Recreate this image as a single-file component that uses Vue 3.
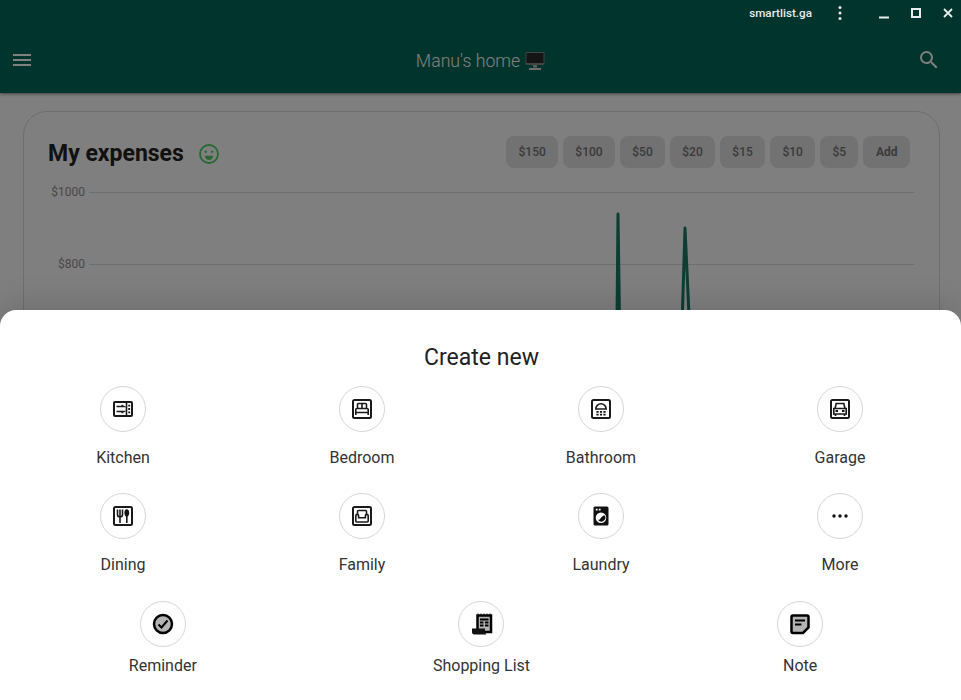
<script setup>
const chips = ['$150', '$100', '$50', '$20', '$15', '$10', '$5', 'Add']
const ticks = ['$1000', '$800', '$600', '$400']

const frame = ['s', 'M4.500 3h15A1.500 1.500 0 0 1 21 4.500v15a1.500 1.500 0 0 1-1.500 1.500h-15A1.500 1.500 0 0 1 3 19.500v-15A1.500 1.500 0 0 1 4.500 3z']

// s = outline, t = thin outline, f = solid, g = grey fill with outline, w = white knock-out
const rooms = [
  { label: 'Kitchen', parts: [
    ['s', 'M4 5h16a1 1 0 0 1 1 1v12a1 1 0 0 1-1 1H4a1 1 0 0 1-1-1V6a1 1 0 0 1 1-1z'],
    ['t', 'M15.500 5v14M5.500 9.500h7l-2-1.200M5.500 14.500h7l-2 1.200'],
    ['f', 'M17.300 7.800h1.800v1.800h-1.800zM17.300 11.100h1.800v1.800h-1.800zM17.300 14.400h1.800v1.800h-1.800z']
  ] },
  { label: 'Bedroom', parts: [
    frame,
    ['t', 'M5.800 18v-5.500a1 1 0 0 1 1-1h10.400a1 1 0 0 1 1 1V18M5.800 15.500h12.400M7.500 11.500V7.500a1 1 0 0 1 1-1h7a1 1 0 0 1 1 1v4M12 6.500v5']
  ] },
  { label: 'Bathroom', parts: [
    frame,
    ['t', 'M6.800 12a5.200 5.200 0 0 1 10.400 0z'],
    ['f', 'M7.400 13.900h2.200v1.900H7.400zM10.900 13.900h2.200v1.900h-2.200zM14.400 13.900h2.200v1.900h-2.200zM7.400 16.700h2.200v1.900H7.400zM10.900 16.700h2.200v1.900h-2.200zM14.400 16.700h2.200v1.900h-2.200z']
  ] },
  { label: 'Garage', parts: [
    frame,
    ['t', 'M7 11.500l1.200-5h7.600l1.200 5M5.800 11.500h12.400v5.500H5.800zM7.500 17v2M16.500 17v2'],
    ['f', 'M7.500 13h2.500v2H7.500zM14 13h2.500v2H14z']
  ] },
  { label: 'Dining', parts: [
    frame,
    ['t', 'M6.500 5.500v5a2.500 2.500 0 0 0 5 0v-5M9 5.500V19M15.800 12v7'],
    ['f', 'M15.800 5.300c1.500 0 2.400 1.600 2.400 3.500s-1 4-2.400 4-2.400-2.100-2.400-4 .9-3.500 2.400-3.500z']
  ] },
  { label: 'Family', parts: [
    frame,
    ['t', 'M7.500 11V7.500a1 1 0 0 1 1-1h7a1 1 0 0 1 1 1V11M5.800 11.800a1.400 1.400 0 0 1 2.800 0v2h6.800v-2a1.400 1.400 0 0 1 2.800 0V17a1 1 0 0 1-1 1H6.800a1 1 0 0 1-1-1z']
  ] },
  { label: 'Laundry', parts: [
    ['f', 'M6 2.500h12A1.500 1.500 0 0 1 19.500 4v16a1.500 1.500 0 0 1-1.500 1.500H6A1.500 1.500 0 0 1 4.500 20V4A1.500 1.500 0 0 1 6 2.500z'],
    ['w', 'M6.800 4.800h1.800v1.800H6.800zM9.800 4.800h1.800v1.800H9.800zM12 8.500a5.300 5.300 0 1 1 0 10.600 5.300 5.300 0 0 1 0-10.600z'],
    ['f', 'M15.500 11.200a4 4 0 0 1-6.400 4.800c2.600-.2 2.600-3.400 6.400-4.800z']
  ] },
  { label: 'More', parts: [
    ['f', 'M6 10.300a1.700 1.700 0 1 1 0 3.400 1.700 1.700 0 0 1 0-3.400zM12 10.300a1.700 1.700 0 1 1 0 3.400 1.700 1.700 0 0 1 0-3.400zM18 10.300a1.700 1.700 0 1 1 0 3.400 1.700 1.700 0 0 1 0-3.400z']
  ] }
]

const extras = [
  { label: 'Reminder', parts: [
    ['g', 'M12 3a9 9 0 1 1 0 18 9 9 0 0 1 0-18z'],
    ['c', 'M7.500 12.500l3 3 6-7']
  ] },
  { label: 'Shopping List', parts: [
    ['g', 'M8.500 3.500h13.500V20H8.500z'],
    ['c', 'M11 7.500h8.500M11 10.500h3.500M16 10.500h3.500M11 13.500h3.500M16 13.500h3.500'],
    ['f', 'M8.500 1.500h1v2h-1zM11.500 1.500h1v2h-1zM14.500 1.500h1v2h-1zM17.500 1.500h1v2h-1zM20.500 1.500h1v2h-1zM3 16.500h13v3c0 1.200.6 2 1.500 3H5.500c-1.800 0-2.500-1.200-2.500-2.500z']
  ] },
  { label: 'Note', parts: [
    ['g', 'M5 3.500h14A1.500 1.500 0 0 1 20.500 5v10.500L15 21H5a1.500 1.500 0 0 1-1.500-1.500V5A1.500 1.500 0 0 1 5 3.500z'],
    ['c', 'M7 8.500h10M7 12.500h6.500']
  ] }
]
</script>

<template>
  <div class="app">
    <header class="appbar">
      <div class="titlebar">
        <span class="site">smartlist.ga</span>
        <svg class="win-menu" viewBox="0 0 4 16"><circle cx="2" cy="2.500" r="1.500" /><circle cx="2" cy="8" r="1.500" /><circle cx="2" cy="13.500" r="1.500" /></svg>
        <div class="win-btns">
          <svg viewBox="0 0 12 12"><path d="M1 10.500h10" stroke-width="2" /></svg>
          <svg viewBox="0 0 12 12"><path d="M2 2h8v8H2z" stroke-width="2" fill="none" /></svg>
          <svg viewBox="0 0 12 12"><path d="M2 2l8 8M10 2l-8 8" stroke-width="1.800" /></svg>
        </div>
      </div>
      <div class="toolbar">
        <svg class="tool-icon" viewBox="0 0 24 24"><path d="M3 18h18v-2H3v2zm0-5h18v-2H3v2zm0-7v2h18V6H3z" /></svg>
        <h1 class="home">
          Manu's home
          <svg class="monitor" viewBox="0 0 20 20">
            <rect x="0.500" y="1" width="19" height="13" rx="1" fill="#888" />
            <rect x="1.500" y="2" width="17" height="10" fill="#2a2a2a" />
            <path d="M8 14h4v2.500H8z" fill="#bbb" />
            <path d="M4 17h12v2H4z" fill="#ddd" />
          </svg>
        </h1>
        <svg class="tool-icon" viewBox="0 0 24 24"><path d="M15.500 14h-.79l-.28-.27A6.470 6.470 0 0 0 16 9.500 6.500 6.500 0 1 0 9.500 16c1.610 0 3.090-.59 4.230-1.570l.27.28v.79l5 4.990L20.490 19l-4.990-5zm-6 0C7.010 14 5 11.990 5 9.500S7.010 5 9.500 5 14 7.010 14 9.500 11.990 14 9.500 14z" /></svg>
      </div>
    </header>

    <main class="content">
      <section class="card">
        <div class="card-head">
          <h2>My expenses</h2>
          <svg class="mood" viewBox="0 0 24 24">
            <circle cx="12" cy="12" r="9.800" fill="none" stroke-width="2" />
            <circle class="mood-fill" cx="8.500" cy="9.500" r="1.300" />
            <circle class="mood-fill" cx="15.500" cy="9.500" r="1.300" />
            <path class="mood-fill" d="M7.500 14h9a4.500 4.500 0 0 1-9 0z" />
          </svg>
          <div class="chips">
            <button v-for="chip in chips" :key="chip" class="chip" :class="{ add: chip === 'Add' }">{{ chip }}</button>
          </div>
        </div>
        <div class="chart">
          <div v-for="tick in ticks" :key="tick" class="tick">
            <span>{{ tick }}</span>
            <i></i>
          </div>
          <svg class="spikes" viewBox="0 0 866 240">
            <path d="M568 240L570 30L573 240M631 240L637 44L646 240" />
          </svg>
        </div>
      </section>
    </main>

    <div class="scrim"></div>

    <section class="sheet">
      <h3>Create new</h3>
      <div class="grid rooms">
        <div v-for="item in rooms" :key="item.label" class="entry">
          <span class="circle">
            <svg viewBox="0 0 24 24">
              <path v-for="(p, i) in item.parts" :key="i" :class="'p-' + p[0]" :d="p[1]" />
            </svg>
          </span>
          <span class="name">{{ item.label }}</span>
        </div>
      </div>
      <div class="grid extras">
        <div v-for="item in extras" :key="item.label" class="entry">
          <span class="circle">
            <svg viewBox="0 0 24 24">
              <path v-for="(p, i) in item.parts" :key="i" :class="'p-' + p[0]" :d="p[1]" />
            </svg>
          </span>
          <span class="name">{{ item.label }}</span>
        </div>
      </div>
    </section>
  </div>
</template>

<style>
html, body {
  margin: 0;
  background: #fff;
}
</style>

<style scoped>
.app {
  position: relative;
  width: 961px;
  height: 700px;
  overflow: hidden;
  background: #fff;
  font-family: Roboto, "Liberation Sans", sans-serif;
}
.appbar {
  background: #00685a;
  height: 93px;
  box-shadow: 0 1px 3px rgba(0,0,0,.5);
}
.titlebar {
  position: relative;
  z-index: 3;
  display: flex;
  align-items: center;
  justify-content: flex-end;
  height: 26px;
  padding-right: 7px;
  color: #e8ecec;
}
.site {
  font-size: 11.700px;
  font-weight: 500;
}
.win-menu {
  width: 4px;
  height: 16px;
  margin-left: 26px;
  fill: #e8ecec;
}
.win-btns {
  display: flex;
  gap: 20px;
  margin-left: 36px;
}
.win-btns svg {
  width: 12px;
  height: 12px;
  stroke: #e8ecec;
}
.toolbar {
  display: flex;
  align-items: center;
  justify-content: space-between;
  height: 67px;
  padding: 0 20px 0 10px;
}
.tool-icon {
  width: 24px;
  height: 24px;
  fill: #fff;
}
.home {
  display: flex;
  align-items: center;
  gap: 5px;
  margin: 2px 0 0;
  padding-left: 10px;
  font-size: 17.700px;
  font-weight: 300;
  color: #fff;
}
.monitor {
  width: 20px;
  height: 20px;
}
.content {
  padding: 18px 21px 0 23px;
}
.card {
  height: 500px;
  box-sizing: border-box;
  padding: 24px 25px 0 24px;
  border: 1px solid #dcdcdc;
  border-radius: 24px;
}
.card-head {
  display: flex;
  align-items: center;
  height: 32px;
}
.card-head h2 {
  margin: 2px 0 0;
  font-size: 23px;
  font-weight: 700;
  color: #222;
}
.mood {
  width: 22px;
  height: 22px;
  margin: 4px 0 0 14px;
  stroke: #4fd068;
}
.mood-fill {
  fill: #4fd068;
  stroke: none;
}
.chips {
  display: flex;
  gap: 5px;
  margin: 0 4px 0 auto;
}
.chip {
  height: 32px;
  padding: 0 12.300px;
  border: 0;
  border-radius: 8px;
  background: #e4e4e4;
  color: #757575;
  font: 500 12px Roboto, "Liberation Sans", sans-serif;
}
.chip.add {
  font-weight: 700;
  padding: 0 12.500px;
}
.chart {
  position: relative;
  margin-top: 16px;
}
.tick {
  display: flex;
  align-items: center;
  height: 16px;
  margin-bottom: 56px;
}
.tick span {
  width: 37px;
  margin-right: 4px;
  font-size: 12px;
  line-height: 16px;
  text-align: right;
  color: #909090;
}
.tick i {
  flex: 1;
  height: 1px;
  background: #dcdcdc;
}
.spikes {
  position: absolute;
  left: 0;
  top: 0;
  width: 866px;
  height: 240px;
  fill: none;
  stroke: #1a7a66;
  stroke-width: 3;
  stroke-linejoin: round;
}
.scrim {
  position: absolute;
  inset: 0;
  z-index: 1;
  background: rgba(0,0,0,.5);
}
.sheet {
  position: absolute;
  left: 0;
  right: 0;
  bottom: 0;
  z-index: 2;
  height: 390px;
  box-sizing: border-box;
  padding: 32px 1.500px 0 3.500px;
  background: #fff;
  border-radius: 16px 16px 0 0;
  box-shadow: 0 -8px 30px rgba(0,0,0,.12);
}
.sheet h3 {
  margin: 0 0 12px;
  font-size: 23px;
  font-weight: 400;
  line-height: 32px;
  text-align: center;
  color: #222;
}
.grid {
  display: grid;
  text-align: center;
}
.rooms {
  grid-template-columns: repeat(4, 1fr);
  row-gap: 23px;
}
.extras {
  grid-template-columns: repeat(3, 1fr);
  margin-top: 24px;
}
.entry {
  display: flex;
  flex-direction: column;
  align-items: center;
  gap: 14px;
}
.extras .entry {
  gap: 7px;
}
.circle {
  display: flex;
  align-items: center;
  justify-content: center;
  width: 46px;
  height: 46px;
  box-sizing: border-box;
  border: 1px solid #d6d6d6;
  border-radius: 50%;
}
.circle svg {
  width: 24px;
  height: 24px;
}
.name {
  font-size: 16px;
  line-height: 24px;
  color: #333;
}
.p-s { fill: none; stroke: #1a1a1a; stroke-width: 2; }
.p-t { fill: none; stroke: #1a1a1a; stroke-width: 1.600; }
.p-f { fill: #111; }
.p-w { fill: #fff; }
.p-g { fill: #b4b4b4; stroke: #000; stroke-width: 2.500; }
.p-c { fill: none; stroke: #000; stroke-width: 2; }
</style>
